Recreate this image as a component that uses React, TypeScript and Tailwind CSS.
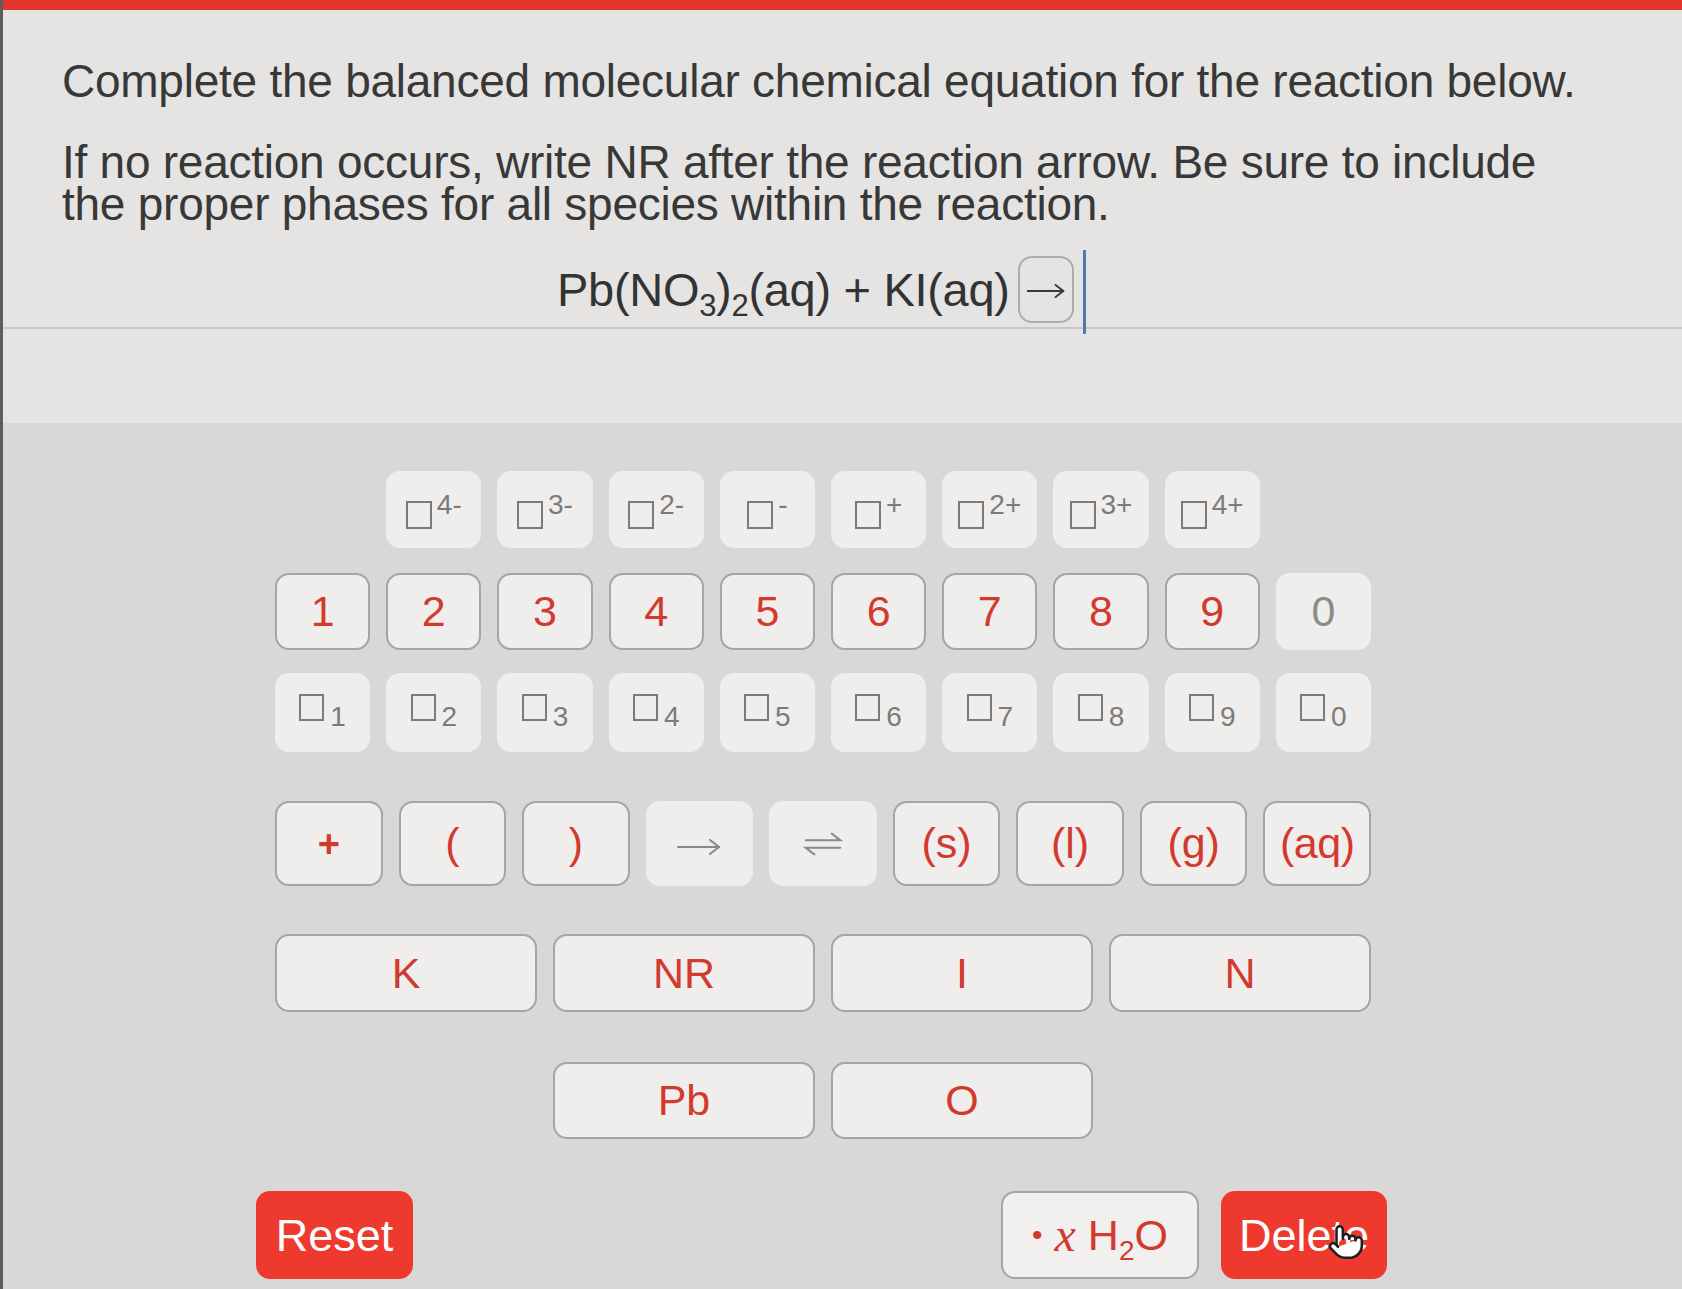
import { Pointer } from "lucide-react";
import clsx from "clsx";
import type { ReactNode } from "react";

// ---------- small pieces ----------

function Key({
  children,
  bordered = true,
  className,
}: {
  children: ReactNode;
  bordered?: boolean;
  className?: string;
}) {
  return (
    <div
      className={clsx(
        "flex items-center justify-center rounded-[14px] bg-[#efeeec] border-2",
        bordered ? "border-[#a6a5a3]" : "border-transparent",
        className
      )}
    >
      {children}
    </div>
  );
}

function Box({ className }: { className?: string }) {
  return <span className={clsx("block border-[2.5px] border-[#7b7b7b]", className)} />;
}

function ChargeKey({ label }: { label: string }) {
  return (
    <Key bordered={false}>
      <div className="flex items-start">
        <Box className="mt-[10px] h-[28px] w-[26px]" />
        <span className="ml-[5px] text-[28px] leading-none text-[#7b7b7b]">{label}</span>
      </div>
    </Key>
  );
}

function SubKey({ label }: { label: string }) {
  return (
    <Key bordered={false}>
      <div className="flex items-end">
        <Box className="mb-[10px] h-[27px] w-[25px]" />
        <span className="ml-[6px] text-[28px] leading-none text-[#7b7b7b]">{label}</span>
      </div>
    </Key>
  );
}

function RightArrow({ className, color = "#8a8988" }: { className?: string; color?: string }) {
  return (
    <svg viewBox="0 0 46 20" className={className} fill="none" stroke={color} strokeWidth={2.2} strokeLinecap="round">
      <path d="M2 10 H43" />
      <path d="M34 3 L43 10 L34 17" strokeLinejoin="round" />
    </svg>
  );
}

function EquilibriumArrow({ className }: { className?: string }) {
  return (
    <svg viewBox="0 0 42 26" className={className} fill="none" stroke="#8a8988" strokeWidth={2.2} strokeLinecap="round">
      <path d="M3 9 H39 L30 2" />
      <path d="M39 17 H3 L12 24" />
    </svg>
  );
}

const charges = ["4-", "3-", "2-", "-", "+", "2+", "3+", "4+"];
const digits = ["1", "2", "3", "4", "5", "6", "7", "8", "9"];
const subs = ["1", "2", "3", "4", "5", "6", "7", "8", "9", "0"];

// ---------- page ----------

export default function App() {
  return (
    <div className="relative h-[1289px] w-full overflow-hidden border-l-[3px] border-[#5d5d5d] bg-[#d9d8d6] font-['Liberation_Sans','DejaVu_Sans',sans-serif]">
      {/* top red strip */}
      <div className="h-[10px] bg-[#e2352c]" />

      {/* question */}
      <div className="bg-[#e5e4e2]">
        <div className="h-[319px] border-b-2 border-[#c9c8c6] pt-[45px]">
          <p className="pl-[59px] text-[46px] leading-[53px] tracking-[-0.25px] text-[#383838]">
            Complete the balanced molecular chemical equation for the reaction below.
          </p>
          <p className="mt-[33px] pl-[59px] text-[46px] leading-[42px] tracking-[-0.25px] text-[#383838]">
            If no reaction occurs, write NR after the reaction arrow. Be sure to include
            <br />
            the proper phases for all species within the reaction.
          </p>

          {/* equation */}
          <div className="mt-[25px] flex h-[78px] items-center pl-[554px] text-[#333]">
            <span className="text-[47px] leading-none tracking-[-0.3px]">
              Pb(NO<sub className="align-[-3px] text-[31px]">3</sub>)
              <sub className="align-[-3px] text-[31px]">2</sub>(aq) + KI(aq)
            </span>
            <span className="ml-[8px] flex h-[67px] w-[56px] items-center justify-center rounded-[14px] border-2 border-[#adacaa]">
              <RightArrow className="mt-[4px] h-[18px] w-[40px]" color="#3a3a3a" />
            </span>
            <span className="ml-[9px] mt-[6px] block h-[84px] w-[3px] bg-[#4b7bb0]" />
          </div>
        </div>
        <div className="h-[94px]" />
      </div>

      {/* keypad */}
      <div className="ml-[272px] w-[1096px] pt-[48px]">
        <div className="grid h-[77px] grid-cols-10 gap-x-4">
          {charges.map((c, i) => (
            <div key={c} className={i === 0 ? "col-start-2 grid" : "grid"}>
              <ChargeKey label={c} />
            </div>
          ))}
        </div>

        <div className="mt-[25px] grid h-[77px] grid-cols-10 gap-x-4">
          {digits.map((d) => (
            <Key key={d}>
              <span className="text-[43px] leading-none text-[#d23a2e]">{d}</span>
            </Key>
          ))}
          <Key bordered={false}>
            <span className="text-[43px] leading-none text-[#8c8b8a]">0</span>
          </Key>
        </div>

        <div className="mt-[23px] grid h-[79px] grid-cols-10 gap-x-4">
          {subs.map((s) => (
            <SubKey key={s} label={s} />
          ))}
        </div>

        <div className="mt-[49px] grid h-[85px] grid-cols-9 gap-x-4">
          <Key>
            <span className="text-[38px] font-bold leading-none text-[#d23a2e]">+</span>
          </Key>
          <Key>
            <span className="text-[43px] leading-none text-[#d23a2e]">(</span>
          </Key>
          <Key>
            <span className="text-[43px] leading-none text-[#d23a2e]">)</span>
          </Key>
          <Key bordered={false}>
            <RightArrow className="mt-[6px] h-[20px] w-[46px]" />
          </Key>
          <Key bordered={false}>
            <EquilibriumArrow className="h-[26px] w-[40px]" />
          </Key>
          <Key>
            <span className="text-[43px] leading-none text-[#d23a2e]">(s)</span>
          </Key>
          <Key>
            <span className="text-[43px] leading-none text-[#d23a2e]">(l)</span>
          </Key>
          <Key>
            <span className="text-[43px] leading-none text-[#d23a2e]">(g)</span>
          </Key>
          <Key>
            <span className="text-[43px] leading-none tracking-[-0.5px] text-[#d23a2e]">(aq)</span>
          </Key>
        </div>

        <div className="mt-[48px] grid h-[78px] grid-cols-4 gap-x-4">
          {["K", "NR", "I", "N"].map((el) => (
            <Key key={el}>
              <span className="text-[43px] leading-none text-[#d23a2e]">{el}</span>
            </Key>
          ))}
        </div>

        <div className="mt-[50px] grid h-[77px] grid-cols-4 gap-x-4">
          <Key className="col-start-2">
            <span className="text-[43px] leading-none text-[#d23a2e]">Pb</span>
          </Key>
          <Key>
            <span className="text-[43px] leading-none text-[#d23a2e]">O</span>
          </Key>
        </div>
      </div>

      {/* bottom actions */}
      <div className="ml-[253px] mt-[52px] flex h-[88px] w-[1131px] items-stretch">
        <button className="flex w-[157px] items-center justify-center rounded-[14px] bg-[#ee3a2e] text-[45px] leading-none text-white">
          Reset
        </button>
        <div className="flex-1" />
        <div className="flex w-[198px] items-center justify-center gap-[12px] rounded-[14px] border-2 border-[#a6a5a3] bg-[#f1f0ee] text-[#d23a2e]">
          <span className="text-[30px] leading-none">•</span>
          <span className="font-['Liberation_Serif',serif] text-[48px] italic leading-none">x</span>
          <span className="text-[43px] leading-none">
            H<sub className="align-[-3px] text-[28px]">2</sub>O
          </span>
        </div>
        <button className="relative ml-[22px] flex w-[166px] items-center justify-center rounded-[14px] bg-[#ee3a2e] text-[45px] leading-none text-white">
          Delete
          <Pointer
            className="absolute left-[106px] top-[32px] h-[38px] w-[38px]"
            fill="white"
            stroke="#1f1f1f"
            strokeWidth={1.6}
          />
        </button>
      </div>
    </div>
  );
}
